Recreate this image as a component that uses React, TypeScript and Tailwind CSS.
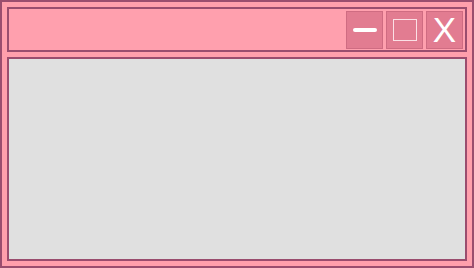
export default function App() {
  return (
    <div className="w-[474px] h-[268px] bg-[#ff9fac] border-2 border-[#9a4d6e] flex flex-col gap-[5px] p-[5px] font-['Liberation_Sans',sans-serif]">
      <div className="h-[45px] border-2 border-[#9a4d6e] bg-[#ffa0ae] flex items-center justify-end gap-[3px] pr-[2px]">
        <button className="w-[37px] h-[38px] bg-[#e27c91] border border-[#cf6c82] flex items-center justify-center">
          <span className="w-[24px] h-[4px] bg-white rounded-sm" />
        </button>
        <button className="w-[37px] h-[38px] bg-[#e27c91] border border-[#cf6c82] flex items-center justify-center">
          <span className="w-[24px] h-[22px] border-[1.5px] border-[#fbe0e6]" />
        </button>
        <button className="w-[37px] h-[38px] bg-[#e27c91] border border-[#cf6c82] flex items-center justify-center text-white text-[35px] leading-none">
          X
        </button>
      </div>
      <div className="flex-1 border-2 border-[#9a4d6e] bg-[#e0e0e0]" />
    </div>
  );
}
